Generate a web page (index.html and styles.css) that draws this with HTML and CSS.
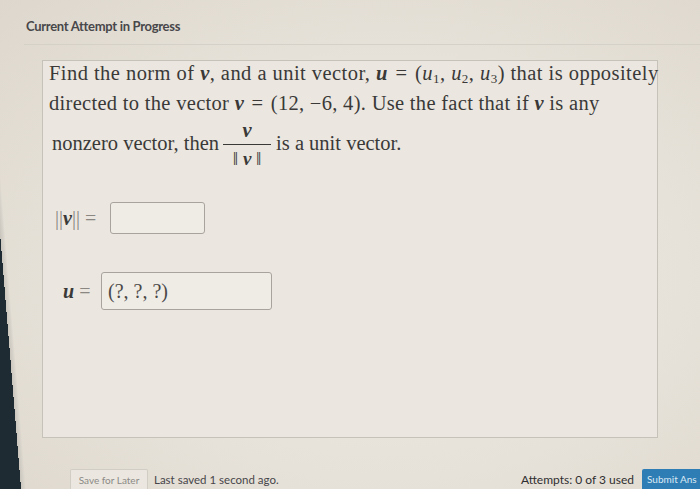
FILE: index.html
```html
<!DOCTYPE html>
<html>
<head>
<meta charset="utf-8">
<link rel="stylesheet" href="styles.css">
</head>
<body>
<div class="page">
  <div class="head">Current Attempt in Progress</div>
  <div class="rule"></div>
  <div class="qbox">
    <p class="q l1">Find the norm of <b class="m">v</b>, and a unit vector, <b class="m">u</b> <span class="op">=</span> (<i class="u">u</i><sub>1</sub>, <i class="u">u</i><sub>2</sub>, <i class="u">u</i><sub>3</sub>) that is oppositely</p>
    <p class="q l2">directed to the vector <b class="m">v</b> <span class="op">=</span> (12, −6, 4). Use the fact that if <b class="m">v</b> is any</p>
    <p class="q l3">nonzero vector, then <span class="frac"><span class="num"><b class="m">v</b></span><span class="den">‖ <b class="m">v</b> ‖</span></span> is a unit vector.</p>
    <div class="row r1"><span class="lbl">||<b class="m">v</b>|| =</span><span class="inp"></span></div>
    <div class="row r2"><span class="lbl"><b class="m">u</b> =</span><span class="inp wide">(?, ?, ?)</span></div>
  </div>
  <div class="foot">
    <span class="save">Save for Later</span>
    <span class="saved">Last saved 1 second ago.</span>
    <span class="spacer"></span>
    <span class="attempts">Attempts: 0 of 3 used</span>
    <span class="submit">Submit Ans</span>
  </div>
</div>
</body>
</html>
```
FILE: styles.css
```css
html, body {
  margin: 0;
  height: 100%;
}
body {
  width: 700px;
  height: 489px;
  overflow: hidden;
  font-family: Lato, "Liberation Sans", sans-serif;
  color: #3b3a38;
  background:
    linear-gradient(85.3deg, #1e2b33 21px, #c9c5bd 21px, #d8d3ca 24px, rgba(0,0,0,0) 26px),
    radial-gradient(ellipse at 55% 55%, #ece8e1 0%, #e7e2d9 55%, #ddd7cd 100%);
}
.page {
  display: flex;
  flex-direction: column;
  height: 489px;
}
.head {
  margin: 18px 0 0 26px;
  font-size: 13px;
  line-height: 16px;
  font-weight: 700;
  color: #48474a;
  letter-spacing: -0.3px;
}
.rule {
  margin: 10px 0 0 24px;
  border-top: 1px solid #d6d1c8;
}
.qbox {
  box-sizing: border-box;
  margin: 15px 0 0 42px;
  width: 616px;
  height: 382px;
  border: 1px solid #c7c2b9;
  background: #ebe7e0;
  padding: 0 0 0 6px;
  font-family: "Liberation Serif", "Times New Roman", serif;
  color: #3a3938;
}
.q {
  margin: 0;
  font-size: 20.5px;
  letter-spacing: 0.45px;
  line-height: 30px;
  height: 30px;
  white-space: nowrap;
}
.l1 { margin-top: -3px; }
.l2 { letter-spacing: 0.3px; }
.m {
  font-style: italic;
  font-weight: 700;
}
.u { font-style: italic; }
sub {
  font-size: 13px;
  line-height: 0;
  vertical-align: -3px;
}
.op { padding: 0 2px; }
.l3 {
  margin-top: 5px;
  padding-left: 3px;
  height: 40px;
  display: flex;
  align-items: center;
  letter-spacing: 0;
}
.frac {
  display: inline-flex;
  flex-direction: column;
  align-items: center;
  margin: 0 5px 0 4px;
  width: 48px;
  line-height: 27px;
  position: relative;
  top: 1px;
}
.num {
  border-bottom: 1px solid #3a3938;
  width: 100%;
  text-align: center;
}
.den {
  font-size: 19px;
}
.row {
  display: flex;
  align-items: center;
}
.lbl {
  font-size: 20px;
  color: #8a8782;
}
.lbl .m { color: #3a3938; }
.r1 {
  margin-top: 39px;
  padding-left: 6px;
}
.r1 .lbl { width: 55px; }
.r2 {
  margin-top: 38px;
  padding-left: 14px;
}
.r2 .lbl { width: 38px; }
.inp {
  box-sizing: border-box;
  width: 95px;
  height: 32px;
  border: 1px solid #a8a49d;
  border-radius: 3px;
  background: #efece6;
}
.inp.wide {
  width: 171px;
  height: 38px;
  padding-left: 6px;
  font-size: 20px;
  line-height: 36px;
  color: #4a4946;
}
.foot {
  margin: 31px 0 0 70px;
  display: flex;
  align-items: center;
  height: 20px;
  white-space: nowrap;
}
.save {
  box-sizing: border-box;
  height: 20px;
  width: 78px;
  border: 1px solid #d2cdc4;
  border-bottom: none;
  border-radius: 2px 2px 0 0;
  font-size: 10px;
  line-height: 20px;
  text-align: center;
  color: #8c8a86;
  background: #ebe7e0;
}
.saved {
  margin-left: 6px;
  font-size: 11.5px;
  color: #47464a;
}
.spacer { flex: 1; }
.attempts {
  font-size: 12px;
  color: #2f2e30;
  margin-right: 8px;
}
.submit {
  box-sizing: border-box;
  height: 20px;
  width: 58px;
  padding: 4px 0 0 5px;
  background: #2e7db5;
  color: #dbe9f4;
  font-size: 10px;
  border-radius: 2px 0 0 0;
  overflow: hidden;
}
```
